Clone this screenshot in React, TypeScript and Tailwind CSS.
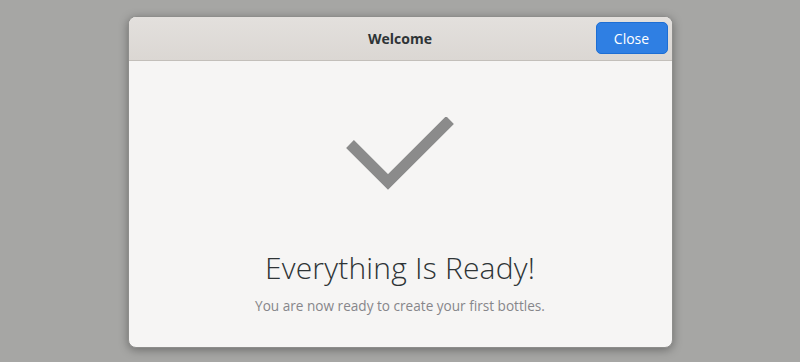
import React from 'react';

export default function App() {
  return (
    <div className="w-[800px] h-[362px] bg-[#a6a6a4] flex justify-center pt-[16px] overflow-hidden" style={{ fontFamily: '"Open Sans", "DejaVu Sans", sans-serif' }}>
      <div className="w-[545px] h-[332px] rounded-[8px] bg-[#f6f5f4] shadow-[0_2px_10px_rgba(0,0,0,0.35)] border border-[#8e8e8c] overflow-hidden flex flex-col">
        <header className="h-[44px] shrink-0 bg-gradient-to-b from-[#e3e0dd] to-[#dbd7d3] border-b border-[#c3bfba] flex items-center relative">
          <span className="flex-1 text-center text-[14px] font-bold text-[#2e3436]">Welcome</span>
          <button className="absolute right-[4px] top-[5px] w-[72px] h-[32px] rounded-[5px] bg-[#2f7fe3] border border-[#1d6ed4] text-white text-[14px] flex items-center justify-center">
            Close
          </button>
        </header>
        <main className="flex-1 flex flex-col items-center pt-[56px]">
          <svg width="120" height="80" viewBox="0 0 120 80">
            <path d="M10 27 L48 65 L110 3" fill="none" stroke="#8b8b8b" strokeWidth="11" strokeLinecap="butt" strokeLinejoin="miter" />
          </svg>
          <h1 className="mt-[56px] text-[30px] font-light text-[#2e3436] leading-none tracking-[0.2px]">Everything Is Ready!</h1>
          <p className="mt-[13px] text-[13.6px] text-[#86868a]">You are now ready to create your first bottles.</p>
        </main>
      </div>
    </div>
  );
}
